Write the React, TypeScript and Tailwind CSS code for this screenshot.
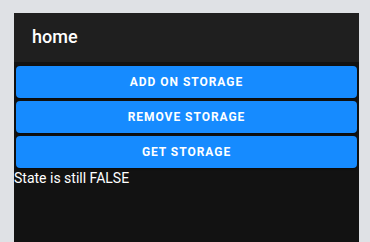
export default function App() {
  const buttons = ['ADD ON STORAGE', 'REMOVE STORAGE', 'GET STORAGE'];

  return (
    <div className="h-[242px] w-[370px] overflow-hidden bg-[#dfe1e5] pl-[14px] pr-[11px] pt-[13px] font-['Roboto',sans-serif]">
      <div className="flex h-[240px] flex-col bg-[#121212]">
        {/* header */}
        <div className="flex h-[49px] items-center bg-[#1f1f1f] px-[18px] pb-[2px]">
          <span className="text-[18px] font-medium text-white">home</span>
        </div>

        <div className="flex flex-col gap-[3px] px-[2px] pt-[4px]">
          {buttons.map((label) => (
            <button
              key={label}
              className="h-[32px] w-full rounded-[4px] bg-[#168bff] text-[12px] font-bold tracking-[0.08em] text-white shadow-[0_1px_2px_rgba(0,0,0,0.5)]"
            >
              {label}
            </button>
          ))}
        </div>

        <p className="mt-[2px] text-[14px] leading-[17px] text-white">State is still FALSE</p>
      </div>
    </div>
  );
}
